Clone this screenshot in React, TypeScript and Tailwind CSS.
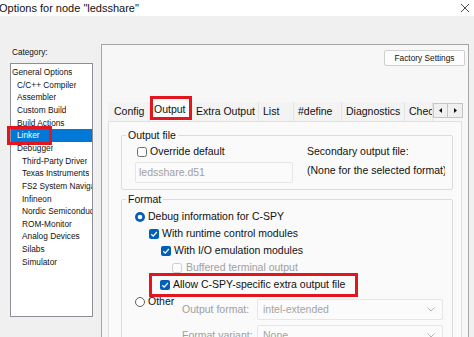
import React from 'react';

const categories: { label: string; level: number; selected?: boolean }[] = [
  { label: 'General Options', level: 0 },
  { label: 'C/C++ Compiler', level: 1 },
  { label: 'Assembler', level: 1 },
  { label: 'Custom Build', level: 1 },
  { label: 'Build Actions', level: 1 },
  { label: 'Linker', level: 1, selected: true },
  { label: 'Debugger', level: 1 },
  { label: 'Third-Party Driver', level: 2 },
  { label: 'Texas Instruments', level: 2 },
  { label: 'FS2 System Navigator', level: 2 },
  { label: 'Infineon', level: 2 },
  { label: 'Nordic Semiconductor', level: 2 },
  { label: 'ROM-Monitor', level: 2 },
  { label: 'Analog Devices', level: 2 },
  { label: 'Silabs', level: 2 },
  { label: 'Simulator', level: 2 },
];

const tabs = [
  { label: 'Config', w: 'w-[42px] pl-[6px]' },
  { label: 'Output', w: 'w-[42px] pl-[4px]', active: true },
  { label: 'Extra Output', w: 'w-[67px] pl-[4px]' },
  { label: 'List', w: 'w-[35px] pl-[4px]' },
  { label: '#define', w: 'w-[48px] pl-[4px]' },
  { label: 'Diagnostics', w: 'w-[63px] pl-[4px]' },
  { label: 'Checksum', w: 'w-[28px] pl-[4px]' },
];

function CheckBox({ checked, disabled }: { checked?: boolean; disabled?: boolean }) {
  if (checked) {
    return (
      <svg width="10" height="10" viewBox="0 0 10 10" className="shrink-0">
        <rect x="0" y="0" width="10" height="10" rx="2" fill="#005fb8" />
        <path d="M2.3 5.2 L4.2 7.1 L7.9 3" fill="none" stroke="#fff" strokeWidth="1.3" />
      </svg>
    );
  }
  return (
    <svg width="10" height="10" viewBox="0 0 10 10" className="shrink-0">
      <rect x="0.5" y="0.5" width="9" height="9" rx="2" fill="#fdfdfd" stroke={disabled ? '#cfcfcf' : '#6e6e6e'} />
    </svg>
  );
}

function Radio({ checked }: { checked?: boolean }) {
  return (
    <svg width="10" height="10" viewBox="0 0 10 10" className="shrink-0">
      {checked ? (
        <>
          <circle cx="5" cy="5" r="5" fill="#005fb8" />
          <circle cx="5" cy="5" r="2.3" fill="#fff" />
        </>
      ) : (
        <circle cx="5" cy="5" r="4.5" fill="#fdfdfd" stroke="#5f5f5f" />
      )}
    </svg>
  );
}

function Select({ value }: { value: string }) {
  return (
    <div className="h-[21px] w-[186px] border border-[#e6e6e6] bg-[#fbfbfb] rounded-[2px] flex items-center pl-[5px] pr-[7px] text-[#a3a3a3]">
      <span>{value}</span>
      <svg width="8" height="5" viewBox="0 0 8 5" className="ml-auto">
        <path d="M0.5 0.5 L4 4 L7.5 0.5" fill="none" stroke="#b5b5b5" strokeWidth="1" />
      </svg>
    </div>
  );
}

export default function App() {
  return (
    <div className="relative w-[474px] h-[337px] overflow-hidden bg-[#f0f0f0] font-['Liberation_Sans',Arial,sans-serif] text-[#111]">
      {/* Title bar */}
      <div className="h-[16px] bg-white flex items-center pr-[5px]">
        <span className="ml-[-1px] text-[11px] leading-none whitespace-nowrap">Options for node "ledsshare"</span>
        <svg width="8" height="8" viewBox="0 0 8 8" className="ml-auto">
          <path d="M0 0 L8 8 M8 0 L0 8" stroke="#333" strokeWidth="0.9" />
        </svg>
      </div>

      <div className="flex">
        {/* Category column */}
        <div className="w-[101px] shrink-0 pl-[10px] pt-[32px]">
          <div className="text-[8.2px] leading-[10px] ml-[2px]">Category:</div>
          <div className="mt-[5px] w-[83px] h-[254px] bg-white border border-[#8c8f95] pt-[2px] text-[8.3px]">
            {categories.map((c) => (
              <div
                key={c.label}
                className={
                  'relative h-[12.65px] flex items-center whitespace-nowrap ' +
                  (c.selected ? 'bg-[#0078d7] text-white ' : '') +
                  (c.level === 0 ? 'pl-[1px]' : c.level === 1 ? 'pl-[6px]' : 'pl-[11px]')
                }
              >
                <span className="overflow-hidden">{c.label}</span>
                {c.selected && (
                  <div className="absolute left-[-4px] top-[-3px] w-[45px] h-[19px] border-[3px] border-[#e3161f]" />
                )}
              </div>
            ))}
          </div>
        </div>

        {/* Right frame */}
        <div className="mt-[28px] w-[368px] h-[300px] border border-[#a6a6a6] bg-[#f7f7f7]">
          <div className="flex justify-end pr-[3px] pt-[5px]">
            <button className="h-[16px] w-[81px] border border-[#cfcfcf] bg-[#fdfdfd] rounded-[2px] text-[8.3px] leading-none">
              Factory Settings
            </button>
          </div>

          {/* Tabs */}
          <div className="mt-[33px] ml-[6px] h-[22px] flex items-end text-[10.5px]">
            {tabs.map((t) =>
              t.active ? (
                <div key={t.label} className={'relative h-[22px] flex items-center bg-[#fbfbfb] ' + t.w}>
                  <span>{t.label}</span>
                  <div className="absolute left-0 top-[-3px] w-[42px] h-[24px] border-[3px] border-[#e3161f]" />
                </div>
              ) : (
                <div
                  key={t.label}
                  className={'h-[19px] flex items-center overflow-hidden whitespace-nowrap border-r border-[#e4e4e4] bg-[#f3f3f3] ' + t.w}
                >
                  {t.label}
                </div>
              )
            )}
            <div className="h-[15px] mb-[3px] w-[15px] border border-[#c4c4c4] bg-[#f0f0f0] flex items-center justify-center">
              <svg width="3" height="5" viewBox="0 0 3 5"><path d="M3 0 L0 2.5 L3 5 Z" fill="#111" /></svg>
            </div>
            <div className="h-[15px] mb-[3px] w-[15px] border border-l-0 border-[#c4c4c4] bg-[#f0f0f0] flex items-center justify-center">
              <svg width="3" height="5" viewBox="0 0 3 5"><path d="M0 0 L3 2.5 L0 5 Z" fill="#111" /></svg>
            </div>
          </div>

          {/* Tab panel */}
          <div className="ml-[6px] w-[354px] h-[230px] border border-[#e0e0e0] bg-[#fafafa] text-[10.5px]">
            <fieldset className="mt-[6px] ml-[12px] w-[332px] border border-[#dcdcdc] rounded-[2px]">
              <legend className="ml-[4px] px-[2px] leading-[14px]">Output file</legend>
              <div className="flex pl-[13px] pt-[3px] pb-[6px]">
                <div className="w-[158px]">
                  <div className="h-[14px] ml-[2px] flex items-center gap-[3px]">
                    <CheckBox />
                    <span>Override default</span>
                  </div>
                  <div className="mt-[3px] h-[21px] border border-[#e6e6e6] bg-[#fbfbfb] rounded-[2px] flex items-center pl-[3px] text-[#a0a0a0]">
                    ledsshare.d51
                  </div>
                </div>
                <div className="ml-[14px] w-[138px] overflow-hidden whitespace-nowrap">
                  <div className="h-[14px] flex items-center">Secondary output file:</div>
                  <div className="mt-[5px] h-[14px] flex items-center">(None for the selected format)</div>
                </div>
              </div>
            </fieldset>

            <fieldset className="mt-[2px] ml-[12px] w-[332px] border border-[#dcdcdc] rounded-[2px]">
              <legend className="ml-[4px] px-[2px] leading-[14px]">Format</legend>
              <div className="pt-[2.5px] pb-[10px] whitespace-nowrap">
                <div className="h-[17px] ml-[13px] flex items-center gap-[3px]">
                  <Radio checked />
                  <span>Debug information for C-SPY</span>
                </div>
                <div className="h-[17px] ml-[27px] flex items-center gap-[3px]">
                  <CheckBox checked />
                  <span>With runtime control modules</span>
                </div>
                <div className="h-[17px] ml-[39px] flex items-center gap-[3px]">
                  <CheckBox checked />
                  <span>With I/O emulation modules</span>
                </div>
                <div className="h-[17px] ml-[50px] flex items-center gap-[4px] text-[#a0a0a0]">
                  <CheckBox disabled />
                  <span>Buffered terminal output</span>
                </div>
                <div className="relative h-[17px] pl-[38px] flex items-center gap-[3px]">
                  <CheckBox checked />
                  <span>Allow C-SPY-specific extra output file</span>
                  <div className="absolute left-[27px] top-[-3.5px] w-[209px] h-[24px] border-[3px] border-[#e3161f]" />
                </div>
                <div className="mt-[2.5px] flex items-start">
                  <div className="ml-[13px] w-[47px] h-[12px] flex items-center gap-[3px]">
                    <Radio />
                    <span>Other</span>
                  </div>
                  <div className="pt-[3px] grid grid-cols-[75px_186px] gap-y-[5px] items-center text-[#a0a0a0]">
                    <span>Output format:</span>
                    <Select value="intel-extended" />
                    <span>Format variant:</span>
                    <Select value="None" />
                  </div>
                </div>
              </div>
            </fieldset>
          </div>
        </div>
      </div>
    </div>
  );
}
